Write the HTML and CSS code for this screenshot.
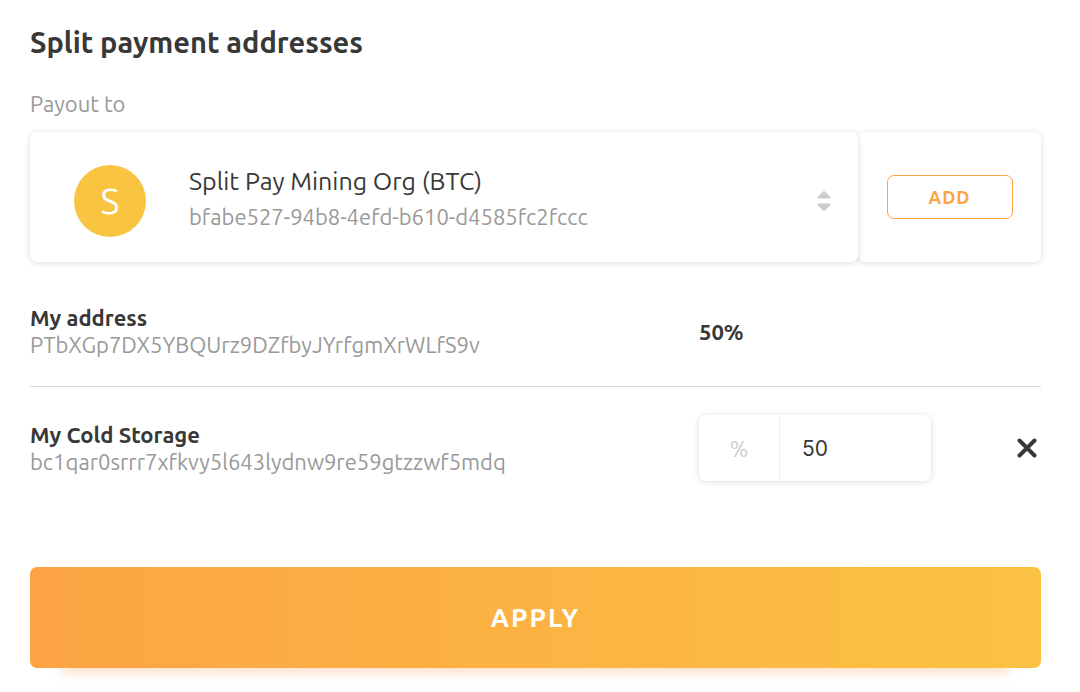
FILE: index.html
```html
<!DOCTYPE html>
<html lang="en">
<head>
<meta charset="utf-8">
<meta name="viewport" content="width=device-width, initial-scale=1">
<title>Split payment addresses</title>
<link rel="stylesheet" href="styles.css">
</head>

<body>
<form class="split">
	<h1 class="title">Split payment addresses</h1>

	<label class="label" for="payout">Payout to</label>
	<div class="payout">
		<div class="card account">
			<div class="avatar">S</div>
			<div class="info">
				<select class="account_select" id="payout">
					<option>Split Pay Mining Org (BTC)</option>
				</select>
				<div class="account_id">bfabe527-94b8-4efd-b610-d4585fc2fccc</div>
			</div>
			<svg class="sort" width="14" height="22" viewBox="0 0 14 22" aria-hidden="true">
				<path d="M1 6.500 L6 1.500 Q7 .5 8 1.500 L13 6.500 Q14.500 8.500 12.500 8.500 H1.500 Q-.5 8.500 1 6.500Z"/>
				<path d="M1 15.500 L6 20.500 Q7 21.500 8 20.500 L13 15.500 Q14.500 13.500 12.500 13.500 H1.500 Q-.5 13.500 1 15.500Z"/>
			</svg>
		</div>
		<div class="card add">
			<button class="btn_add" type="button">ADD</button>
		</div>
	</div>

	<ul class="list">
		<li class="row">
			<div class="who">
				<div class="name">My address</div>
				<div class="address">PTbXGp7DX5YBQUrz9DZfbyJYrfgmXrWLfS9v</div>
			</div>
			<div class="percent">50%</div>
		</li>
		<li class="row">
			<div class="who">
				<div class="name">My Cold Storage</div>
				<div class="address">bc1qar0srrr7xfkvy5l643lydnw9re59gtzzwf5mdq</div>
			</div>
			<div class="card amount">
				<label class="unit" for="share">%</label>
				<input class="share" id="share" type="text" value="50">
			</div>
			<button class="remove" type="button" aria-label="Remove">
				<svg width="20" height="20" viewBox="0 0 20 20"><path d="M2.500 2.500 L17.500 17.500 M17.500 2.500 L2.500 17.500"/></svg>
			</button>
		</li>
	</ul>

	<button class="btn_apply" type="submit">APPLY</button>
</form>
</body>
</html>
```

FILE: styles.css
```css
* { box-sizing: border-box; }
body { margin: 0; background: #fff; color: #383838; font: 22px/27px "Ubuntu", "Noto Sans", sans-serif; }
ul { padding: 0; margin: 0; } li { list-style: none; }
button, input, select { font: inherit; color: inherit; border: 0; padding: 0; margin: 0; background: none; }
button { cursor: pointer; }
svg { display: block; }

.split { padding: 24px 39px 24px 30px; }
.title { margin: 0 0 30px; font-size: 29px; line-height: 36px; font-weight: bold; }
.label { display: block; margin-bottom: 15px; color: #999; }

.card { background: #fff; border-radius: 7px; box-shadow: 0 1px 6px rgba(0,0,0,0.14); }

.payout { display: flex; margin-bottom: 30px; }
.account { display: flex; flex: 1; align-items: center; min-width: 0; padding: 30px 27px 22px 44px; z-index: 1; }
.avatar { width: 72px; height: 72px; border-radius: 50%; background: #fac443; color: #fff; font-size: 36px; line-height: 72px; text-align: center; }
.info { flex: 1; min-width: 0; margin-left: 43px; padding-bottom: 6px; }
.account_select { display: block; width: 100%; height: 38px; font-size: 25px; line-height: 36px; appearance: none; -webkit-appearance: none; cursor: pointer; }
.account_id { line-height: 34px; color: #999; overflow-wrap: anywhere; }
.sort { fill: #ccc; }
.add { display: flex; align-items: center; justify-content: center; width: 183px; }
.btn_add { width: 126px; height: 44px; border: 1px solid #fca444; border-radius: 7px; color: #fca444; font-size: 18px; font-weight: bold; letter-spacing: 1px; }

.row { display: grid; grid-template-columns: minmax(0, 1fr) 232px 110px; align-items: center; padding: 12px 0 28px; }
.row + .row { border-top: 1px solid #d8d8d8; padding: 28px 0; }
.name { font-weight: bold; }
.address { color: #999; overflow-wrap: anywhere; }
.percent { font-weight: bold; }
.amount { display: flex; align-items: center; height: 66px; }
.unit { width: 80px; color: #ccc; text-align: center; }
.share { flex: 1; min-width: 0; height: 62px; padding-left: 22px; border-left: 1px solid #eee; font-family: "Inter", sans-serif; font-size: 21px; }
.remove { justify-self: end; padding: 4px; }
.remove path { fill: none; stroke: #383838; stroke-width: 4; stroke-linecap: round; }

.btn_apply { display: block; width: 100%; height: 101px; margin-top: 58px; border-radius: 7px; background: linear-gradient(90deg, #fca444, #fbc242); box-shadow: 0 37px 10px -32px rgba(252,130,50,0.25); color: #fff; font-size: 26px; font-weight: bold; letter-spacing: 2px; }
```
